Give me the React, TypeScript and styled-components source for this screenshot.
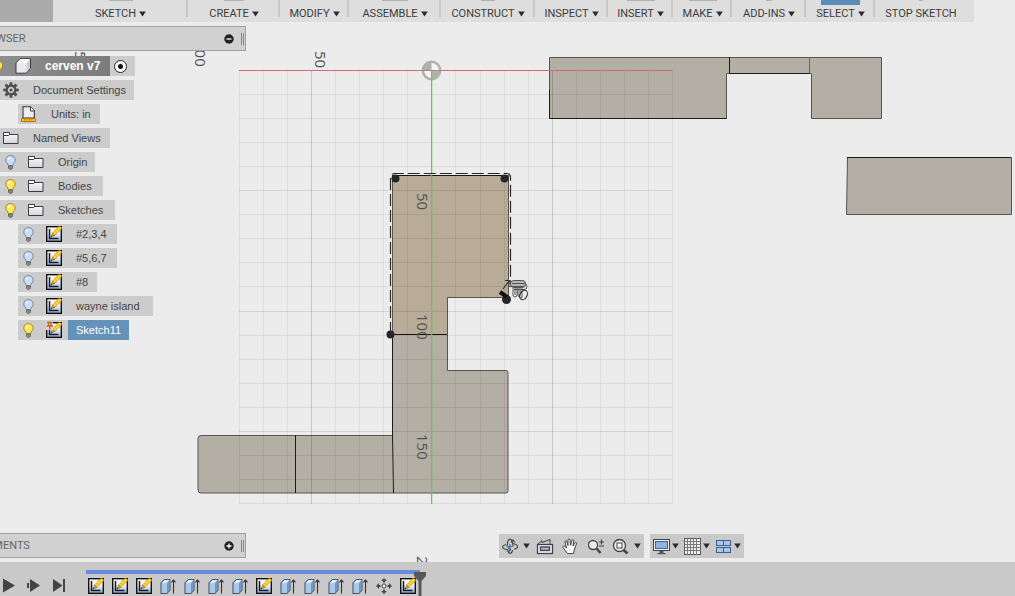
import React from "react";
import styled, { createGlobalStyle } from "styled-components";

const Global = createGlobalStyle`
  * { box-sizing: border-box; }
  body { margin: 0; background: #ececec; color: #444; font: 11px/16px "Liberation Sans", Arial, sans-serif; overflow: hidden; }
  button { font: inherit; color: inherit; background: none; border: 0; padding: 0; }
  svg { display: block; flex: none; }
`;

const Page = styled.div`
  display: grid;
  grid-template-rows: 22px 1fr 34px;
  height: 100vh;
`;

const Toolbar = styled.nav`
  display: flex;
  overflow: hidden;
`;
const WorkspaceTab = styled.div`
  flex: none;
  width: 53px;
  background: #ababab;
`;
const Group = styled.div<{ $w: number; $last?: boolean }>`
  flex: none;
  width: ${(p) => p.$w}px;
  display: flex;
  flex-direction: column;
  align-items: center;
  padding-right: ${(p) => (p.$last ? 7 : 0)}px;
  background: ${(p) => (p.$last ? "none" : "linear-gradient(#c8c8c8, #c8c8c8) right top / 2px 17px no-repeat")} #dedede;
`;
const ToolIcon = styled.span<{ $tone: string; $w: number; $h: number }>`
  height: ${(p) => p.$h}px;
  width: ${(p) => p.$w}px;
  background: ${(p) => p.$tone};
`;
const IconSlot = styled.span`
  flex: none;
  display: flex;
  align-items: flex-start;
  height: 6px;
`;
const MenuButton = styled.button`
  display: flex;
  align-items: center;
  gap: 3px;
  color: #3c3c3c;
  font-family: Roboto, sans-serif;
  line-height: 16px;
  white-space: nowrap;
`;
const Caret = () => (
  <svg width="7" height="6" viewBox="0 0 7 6"><path d="M.2 .5h6.600L3.500 5.500z" fill="#2c2c2c" /></svg>
);

const Stage = styled.main`
  position: relative;
  display: flex;
  flex-direction: column;
  justify-content: space-between;
  padding: 4px 0;
  min-height: 0;
  overflow: hidden;
`;
const Canvas = styled.svg`
  position: absolute;
  inset: 0;
  width: 100%;
  height: 100%;
`;
const Side = styled.aside`
  position: relative;
  width: 246px;
`;
const PanelHead = styled.header`
  width: 246px;
  height: 25px;
  display: flex;
  align-items: center;
  gap: 7px;
  padding-right: 1px;
  background: #d1d1d1;
  border: 1px solid #a0a0a0;
  border-left: 0;
  color: #666;
  font-family: Roboto, sans-serif;
  overflow: hidden;
`;
const PanelTitle = styled.h2<{ $cut: number }>`
  flex: 1;
  margin: 0 0 0 -${(p) => p.$cut}px;
  font-size: 11px;
  font-weight: 400;
`;
const Grip = styled.span`
  width: 3px;
  height: 12px;
  border: solid #888;
  border-width: 0 1px;
`;
const Tree = styled.ul`
  list-style: none;
  margin: 5px 0 0;
  padding: 0;
  display: flex;
  flex-direction: column;
  align-items: flex-start;
  gap: 4px;
`;
const Row = styled.li<{ $indent?: boolean; $pad?: number }>`
  display: flex;
  align-items: center;
  height: 20px;
  margin-left: ${(p) => (p.$indent ? 18 : 0)}px;
  padding-left: ${(p) => p.$pad ?? 3}px;
  background: #cccccc;
`;
const Slot = styled.button<{ $w: number }>`
  display: flex;
  width: ${(p) => p.$w}px;
`;
const Label = styled.span<{ $w: number; $selected?: boolean }>`
  width: ${(p) => p.$w}px;
  padding-left: 8px;
  line-height: 20px;
  white-space: nowrap;
  background: ${(p) => (p.$selected ? "#6592b9" : "transparent")};
  color: ${(p) => (p.$selected ? "#fff" : "#444")};
`;
const RootName = styled.div`
  display: flex;
  align-items: center;
  gap: 13px;
  width: 110px;
  height: 20px;
  background: linear-gradient(90deg, #8e8e8e, #7c7c7c);
  color: #fff;
  font-size: 12px;
  font-weight: 700;
`;
const RootToggle = styled.input`
  appearance: none;
  width: 13px;
  height: 13px;
  margin: 0 8px 0 4px;
  border: 1px solid #222;
  border-radius: 50%;
  background: radial-gradient(circle, #111 0 2px, #fff 3px);
`;

const Bottom = styled.div`
  position: relative;
  display: flex;
  align-items: flex-end;
  gap: 253px;
`;
const NavBars = styled.div`
  display: flex;
  gap: 6px;
`;
const NavBar = styled.div<{ $gap: number; $caretGap: number }>`
  display: flex;
  align-items: center;
  gap: ${(p) => p.$gap}px;
  height: 24px;
  padding: 0 3px;
  background: #c9c9c9;
  button { gap: ${(p) => p.$caretGap}px; }
`;
const NavTool = styled.button`
  display: flex;
  align-items: center;
`;

const Timeline = styled.footer`
  display: flex;
  gap: 21px;
  background: #c9c9c9;
`;
const Playback = styled.div`
  display: flex;
  align-items: center;
  gap: 11px;
  padding: 12px 0 0 3px;
`;
const Track = styled.div`
  position: relative;
  width: 334px;
  height: 34px;
  padding-top: 8px;
`;
const Progress = styled.div`
  height: 4px;
  background: #6a8bdc;
`;
const Steps = styled.div`
  display: flex;
  gap: 8px;
  padding: 4px 0 0 2px;
`;
const Marker = styled.svg`
  position: absolute;
  right: -6px;
  top: 10px;
`;

const SketchIcon = ({ pinned }: { pinned?: boolean }) => (
  <svg width="16" height="16" viewBox="0 1 16 16" overflow="visible">
    <defs>
      <linearGradient id="sk" x1="0" y1="0" x2="0" y2="1"><stop offset=".4" stopColor="#f7f7f5" /><stop offset="1" stopColor="#8db2df" /></linearGradient>
    </defs>
    <rect x=".7" y="1.700" width="14.600" height="14.600" fill="url(#sk)" stroke="#111" strokeWidth="1.400" />
    <path d="M3.500 4v9.500H12.500" fill="none" stroke="#16181c" strokeWidth="1.500" />
    <path d="M5 12l1.600-4L9 10.300z" fill="#dca070" stroke="#7a4a22" strokeWidth=".6" />
    <path d="M6.600 8L13 1.200l2.800 1.600v.8L9 10.300z" fill="#f6c419" stroke="#b98100" strokeWidth=".5" />
    <path d="M8 9.100L14.800 2" stroke="#fff08a" strokeWidth=".8" />
    <path d="M4.600 12.500l.6-1.600 1 .9z" fill="#222" />
    {pinned && (
      <>
        <path d="M0 1h7v8H0z" fill="#dcd8d4" />
        <path d="M1 1.500h5.500M2.500 2v2.500M5 2v2.500M.5 5h6.500M3.700 5v3.500" fill="none" stroke="#c4622c" strokeWidth="1.400" />
      </>
    )}
  </svg>
);
const Bulb = ({ on }: { on?: boolean }) => (
  <svg width="11" height="15" viewBox="0 0 11 15">
    <path d="M5.500.6a4.600 4.600 0 0 0-4.700 4.600c0 2.200 2.200 3 2.600 5.300h4.200c.4-2.300 2.600-3.100 2.600-5.300A4.600 4.600 0 0 0 5.500.6z" fill={on ? "#ffe95e" : "#ccdffa"} stroke={on ? "#a8841f" : "#74819a"} strokeWidth="1" />
    <path d="M3 4.500a2.500 2.500 0 0 1 2.200-2.100" fill="none" stroke="#fff" strokeWidth="1.300" />
    <path d="M3.500 11h4v2l-1 1.300h-2l-1-1.300z" fill="#8c8c8c" stroke="#555" strokeWidth=".7" />
  </svg>
);
const Folder = () => (
  <svg width="16" height="14" viewBox="0 0 16 14">
    <defs><linearGradient id="fo" x1="0" y1="0" x2="0" y2="1"><stop stopColor="#fff" /><stop offset="1" stopColor="#d2d5dc" /></linearGradient></defs>
    <path d="M.5 12.500V1.500h6v2h8.500v9z" fill="url(#fo)" stroke="#3c3c40" />
    <path d="M1 4.500h4.500l1.300-1" fill="none" stroke="#3c3c40" strokeWidth="1" />
  </svg>
);
const Gear = () => (
  <svg width="16" height="16" viewBox="-8 -8 16 16">
    {[0, 45, 90, 135, 180, 225, 270, 315].map((a) => (
      <path key={a} d="M-1.600-4.500L-1.300-7.800h2.600L1.600-4.500z" fill="#505050" transform={`rotate(${a})`} />
    ))}
    <circle r="4.300" fill="none" stroke="#505050" strokeWidth="2.200" />
    <circle r="1.500" fill="#505050" />
  </svg>
);
const Units = () => (
  <svg width="16" height="16" viewBox="0 0 16 16">
    <path d="M2 12V.8h7.500L13.300 5v7z" fill="#eceef2" stroke="#35373b" strokeWidth="1.100" />
    <path d="M9.500.8V5h3.800" fill="#fff" stroke="#35373b" />
    <path d="M.5 12.500h14v3H.5z" fill="#f8c43a" stroke="#b97405" />
    <path d="M3.500 13v1.500M6 13v1.500M8.500 13v1.500M11 13v1.500" stroke="#8a5600" strokeWidth=".7" />
  </svg>
);
const Cube = () => (
  <svg width="17" height="16" viewBox="0 0 17 16">
    <path d="M1 5l4-4.300h10.500v9.500l-4.200 5H1z" fill="#e9eaee" stroke="#3a3a3a" />
    <path d="M1.500 5L5.300 1.200h9.700L11.500 5z" fill="#fff" /><path d="M11.500 5l3.500-3.700v8.700l-3.500 4.500z" fill="#cdced4" />
  </svg>
);
const Extrude = () => (
  <svg width="16" height="16" viewBox="0 0 16 16">
    <path d="M1 5l3.500-3.500H10V12L6.800 15.500H1z" fill="#a9c9ec" stroke="#46566b" strokeWidth="1.100" />
    <path d="M1.500 5l3.200-3H9.500L6.800 5z" fill="#e3effb" /><path d="M7 5l2.500-2.800v9.600L7 14.700z" fill="#6f97c6" />
    <path d="M13.500 15.500V2.500M11.500 4.500l2-2.500 2 2.500" fill="none" stroke="#333" strokeWidth="1.100" />
  </svg>
);
const Move = () => (
  <svg width="16" height="16" viewBox="-8 -8 16 16">
    {[0, 90, 180, 270].map((a) => (
      <path key={a} d="M0-8L3-5H1v1.500h-2v-1.500h-2z" fill="#4a4a4a" transform={`rotate(${a})`} />
    ))}
    <circle r="2" fill="#eee" stroke="#4a4a4a" />
  </svg>
);
const Round = ({ plus }: { plus?: boolean }) => (
  <svg width="10" height="10" viewBox="0 0 10 10">
    <circle cx="5" cy="5" r="4.700" fill="#222" />
    <path d={plus ? "M2.500 5h5M5 2.500v5" : "M2.500 5h5"} stroke="#fff" strokeWidth="1.300" />
  </svg>
);

const groups: { name: string; w: number; icon: number; h?: number; tone?: string; plain?: boolean }[] = [
  { name: "SKETCH", w: 135, icon: 24 },
  { name: "CREATE", w: 92, icon: 20 },
  { name: "MODIFY", w: 69, icon: 0 },
  { name: "ASSEMBLE", w: 92, icon: 26 },
  { name: "CONSTRUCT", w: 94, icon: 14 },
  { name: "INSPECT", w: 73, icon: 0 },
  { name: "INSERT", w: 65, icon: 28 },
  { name: "MAKE", w: 59, icon: 28 },
  { name: "ADD-INS", w: 74, icon: 6 },
  { name: "SELECT", w: 69, icon: 39, h: 5, tone: "#5b8cb8" },
  { name: "STOP SKETCH", w: 99, icon: 4, plain: true },
];

const timelineSteps = [..."sssxxxxsxxxxms"];
const lines = Array.from({ length: 19 }, (_, i) => i);

const Drawing = () => (
  <Canvas role="img" aria-label="Sketch canvas">
    <g transform="translate(0 -22)">
      <g fill="#b3afa4" stroke="#55544f" strokeWidth="1">
        <path d="M549.500 57.500H881.500V118.500H811.500V73.500H726.500V118.500H549.500z" />
        <path d="M847.500 157.500H1011.500V214.500H846.500z" />
        <path d="M392.500 334.500H447.500V370.500H506a2 2 0 0 1 2 2V491a2 2 0 0 1-2 2H201a3 3 0 0 1-3-3V438.500a3 3 0 0 1 3-3H392.500z" />
        <path d="M392.500 175.500H508.500V297.500H447.500V334.500H392.500z" fill="#b8ab97" />
      </g>
      <g fill="none" stroke="#1c1c1a" strokeWidth="1">
        <path d="M549.500 118.500H726.500M549.500 90V118M729.500 57V73.500H809.500M847 157.500H1011M295.500 435V493M392.500 334V435L393.500 493" />
        <path d="M809.500 57V73" stroke="#66655f" />
        <path d="M392 175.500H508M392 334.500H447" stroke="#1d120c" />
      </g>
      <g fill="none" stroke="#000">
        {lines.map((i) => {
          const x = 239.5 + Math.round(i * 24.05);
          const y = 70.5 + Math.round(i * 24.05);
          return (
            <g key={i}>
              <path d={`M${x} 70V504`} strokeOpacity={i === 3 || i === 13 ? 0.16 : 0.06} />
              <path d={`M239 ${y}H672`} strokeOpacity={i % 5 === 0 ? 0.1 : 0.07} />
            </g>
          );
        })}
      </g>
      <path d="M239 70.500H672" stroke="#cf6a76" />
      <circle cx="431.500" cy="70.500" r="8.700" fill="#f4f4f2" stroke="#b0b0ae" strokeWidth="2.500" />
      <path d="M431.500 70.500H422.500A9 9 0 0 1 431.500 61.500zM431.500 70.500H440.500A9 9 0 0 1 431.500 79.500z" fill="#b0b0ae" />
      <path d="M422 70.500H441" stroke="#b98088" />
      <path d="M431 71h1V504h-1z" fill="#58cf48" />
      <path d="M431 71h2V504h-2z" fill="#58cf48" fillOpacity=".25" />
      <path d="M390.500 334V177a4 4 0 0 1 4-3.500H507a4 4 0 0 1 3.500 4V284" fill="none" stroke="#2a2725" strokeWidth="1.200" strokeDasharray="12 4" />
      <g fill="#26262a">
        <circle cx="395.500" cy="178.500" r="4" /><circle cx="504.500" cy="178.500" r="4" />
        <circle cx="390.500" cy="334.500" r="4" /><circle cx="506.500" cy="299.500" r="4.500" />
      </g>
      <path d="M500 292L507 297" stroke="#111" strokeWidth="4" />
      <path d="M503 289l6-8M505 280.500h5v5" fill="none" stroke="#333" strokeWidth="1.200" />
      <g fill="none" stroke="#555" strokeWidth="1">
        <rect x="510.500" y="280.500" width="15" height="7" rx="3" fill="#b4b4b4" />
        <path d="M512 283.500h12a3 3 0 0 1 0 6h-10M509 286.500h15" />
        <path d="M513 288v7a2 2 0 0 0 4 0v-7M515 288v7M518 287v9l4 2V288M520 288v8" />
        <ellipse cx="523.500" cy="295" rx="3.500" ry="5" transform="rotate(30 523.500 295)" stroke="#222" />
      </g>
      <g fontFamily="Open Sans, sans-serif" fontSize="15" fill="#555350">
        <text transform="translate(315 51) rotate(90)">50</text>
        <text transform="translate(195 41) rotate(90)">100</text>
        <text transform="translate(75 51) rotate(90)">5</text>
        <text transform="translate(417 193) rotate(90)">50</text>
        <text transform="translate(417 314) rotate(90)">100</text>
        <text transform="translate(417 434) rotate(90)">150</text>
        <text transform="translate(417 556) rotate(90)">200</text>
      </g>
    </g>
  </Canvas>
);

const sketches = [
  { name: "#2,3,4", w: 49 }, { name: "#5,6,7", w: 49 }, { name: "#8", w: 29 },
  { name: "wayne island", w: 85 }, { name: "Sketch11", w: 61, on: true },
];

export default function App() {
  return (
    <Page>
      <Global />
      <Toolbar>
        <WorkspaceTab />
        {groups.map((g) => (
          <Group key={g.name} $w={g.w} $last={g.plain}>
            <IconSlot><ToolIcon $tone={g.tone ?? "#b2b2b6"} $w={g.icon} $h={g.h ?? 1} /></IconSlot>
            <MenuButton>{g.name}{!g.plain && <Caret />}</MenuButton>
          </Group>
        ))}
      </Toolbar>
      <Stage>
        <Drawing />
        <Side>
          <PanelHead>
            <PanelTitle $cut={25}>BROWSER</PanelTitle>
            <button aria-label="Collapse browser"><Round /></button>
            <Grip />
          </PanelHead>
          <Tree>
            <Row $pad={0}>
              <RootName>
                <Slot $w={2} aria-label="Show cerven v7"><svg width="3" height="12" viewBox="6 0 3 12"><circle cx="4" cy="5.500" r="4.500" fill="#ffe95e" stroke="#a8841f" /></svg></Slot>
                <Cube />
                <span>cerven v7</span>
              </RootName>
              <RootToggle type="radio" defaultChecked aria-label="Activate cerven v7" />
            </Row>
            <Row><Slot $w={22} aria-label="Settings"><Gear /></Slot><Label $w={109}>Document Settings</Label></Row>
            <Row $indent><Slot $w={22} aria-label="Units"><Units /></Slot><Label $w={57}>Units: in</Label></Row>
            <Row><Slot $w={22} aria-label="Views"><Folder /></Slot><Label $w={85}>Named Views</Label></Row>
            {[{ name: "Origin", w: 45 }, { name: "Bodies", w: 53, on: true }, { name: "Sketches", w: 65, on: true }].map((r) => (
              <Row key={r.name} $pad={5}>
                <Slot $w={23} aria-label={`Show ${r.name}`}><Bulb on={r.on} /></Slot>
                <Slot $w={22} aria-label={`Open ${r.name}`}><Folder /></Slot>
                <Label $w={r.w}>{r.name}</Label>
              </Row>
            ))}
            {sketches.map((r) => (
              <Row key={r.name} $indent $pad={5}>
                <Slot $w={23} aria-label={`Show ${r.name}`}><Bulb on={r.on} /></Slot>
                <Slot $w={22} aria-label={`Edit ${r.name}`}><SketchIcon pinned={r.on} /></Slot>
                <Label $w={r.w} $selected={r.on}>{r.name}</Label>
              </Row>
            ))}
          </Tree>
        </Side>
        <Bottom>
          <PanelHead>
            <PanelTitle $cut={31}>COMMENTS</PanelTitle>
            <button aria-label="Expand comments"><Round plus /></button>
            <Grip />
          </PanelHead>
          <NavBars>
            <NavBar $gap={6} $caretGap={4}>
              <NavTool aria-label="Orbit">
                <svg width="17" height="17" viewBox="0 0 17 17" fill="none" stroke="#444" strokeWidth="1.100"><path d="M5.500 12c1 4.500 4.500 4.500 5 0M5.300 9C4.800 1 8 .5 9 1.500c1.200 1 2 4 1.800 7" /><path d="M4 6.500C-1 8-.5 11 6 11.700M11 5.500c6 1.500 6 4.500 1 5.700M6 9.500l2.500 2.200L6 14M9 4.500L11 2l2 2.500" /><path d="M8 6v5M5.500 8.500h5" stroke="#3577b8" /></svg>
                <Caret />
              </NavTool>
              <NavTool aria-label="Look at">
                <svg width="18" height="17" viewBox="0 0 18 17" fill="none" stroke="#3f4145" strokeWidth="1.300"><rect x="1.500" y="6.500" width="15" height="9" fill="#eef1f5" /><rect x="4.500" y="9" width="9" height="3.500" fill="#a9b7ca" /><path d="M2 6L6 2.500V4.500L14 1.500V6" strokeWidth="1" /></svg>
              </NavTool>
              <NavTool aria-label="Pan">
                <svg width="22" height="17" viewBox="-1 0 22 17"><path d="M6.500 15.500L2 9.500c-.8-1.300.7-2 1.600-1.100L5.500 10 4 4c-.3-1.300 1.300-1.700 1.700-.4L7 7.500 7 2c0-1.400 1.900-1.400 2 0l.5 5.300L11 2.400c.4-1.300 2.100-.9 1.800.4L12 8l1.900-3c.8-1.200 2.200-.3 1.600.9L13.500 11l-1 4.500z" fill="#fafafa" stroke="#444" strokeWidth="1" /></svg>
              </NavTool>
              <NavTool aria-label="Zoom">
                <svg width="18" height="17" viewBox="1 0 18 17" fill="none" stroke="#444"><path d="M9.500 10.500l4 4.500" strokeWidth="2.600" /><circle cx="6" cy="7" r="4.500" fill="#e9eef4" strokeWidth="1.300" /><path d="M14.500 1.500v5M12 4h5M12 8h5" strokeWidth="1.200" /></svg>
              </NavTool>
              <NavTool aria-label="Fit">
                <svg width="18" height="17" viewBox="0 0 18 17" fill="none" stroke="#444"><path d="M11 11.500l4.500 4" strokeWidth="2.600" /><circle cx="7.500" cy="7.500" r="6" fill="#e9eef4" strokeWidth="1.300" /><rect x="5" y="5" width="5" height="5" fill="#fff" /></svg>
                <Caret />
              </NavTool>
            </NavBar>
            <NavBar $gap={5} $caretGap={2}>
              <NavTool aria-label="Display settings">
                <svg width="17" height="17" viewBox="0 0 17 17"><rect x=".5" y="1.500" width="16" height="11" fill="#f0f0f0" stroke="#444" /><rect x="2.500" y="3.500" width="12" height="7" fill="#8fb2de" stroke="#3c66a0" /><path d="M6.500 13h4v2h2v1.300h-8V15h2z" fill="#555" /></svg>
                <Caret />
              </NavTool>
              <NavTool aria-label="Grid settings">
                <svg width="17" height="17" viewBox="0 0 17 17"><rect x=".5" y=".5" width="16" height="16" fill="#eee" stroke="#555" /><path d="M3.500 0v17M6.500 0v17M9.500 0v17M12.500 0v17M0 3.500h17M0 6.500h17M0 9.500h17M0 12.500h17" stroke="#777" /></svg>
                <Caret />
              </NavTool>
              <NavTool aria-label="Viewports">
                <svg width="17" height="17" viewBox="0 0 17 17" fill="#a9c6ea" stroke="#3d5f8c"><rect x="1.500" y="2.500" width="7" height="5" /><rect x="8.500" y="2.500" width="7" height="5" /><rect x="1.500" y="9.500" width="7" height="5" /><rect x="8.500" y="9.500" width="7" height="5" /></svg>
                <Caret />
              </NavTool>
            </NavBar>
          </NavBars>
        </Bottom>
      </Stage>
      <Timeline>
        <Playback>
          <button aria-label="Play"><svg width="13" height="15" viewBox="0 0 13 15"><path d="M0 .5L12 7.500 0 14.500z" fill="#444" /></svg></button>
          <button aria-label="Step forward"><svg width="14" height="15" viewBox="0 0 14 15"><path d="M3 1L13 7.500 3 14zM0 5h2v5H0z" fill="#444" /></svg></button>
          <button aria-label="Go to end"><svg width="13" height="15" viewBox="0 0 13 15"><path d="M1 1L10.500 7.500 1 14zM11 1h2v13h-2z" fill="#444" /></svg></button>
        </Playback>
        <Track>
          <Progress />
          <Steps>
            {timelineSteps.map((k, i) => (
              <button key={i} aria-label={`Step ${i + 1}`}>
                {k === "s" ? <SketchIcon /> : k === "x" ? <Extrude /> : <Move />}
              </button>
            ))}
          </Steps>
          <Marker width="12" height="24" viewBox="0 0 12 24"><path d="M0 0h12v4L7.500 9V24h-3V9L0 4z" fill="#585858" /></Marker>
        </Track>
      </Timeline>
    </Page>
  );
}
